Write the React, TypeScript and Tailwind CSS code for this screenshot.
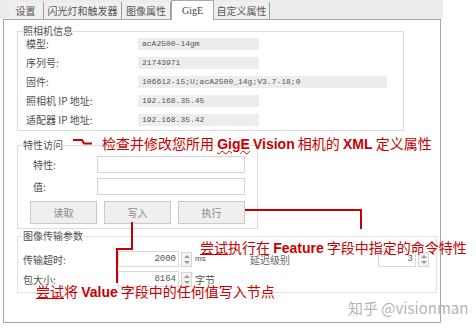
import React from "react";

const tabs = [
  { label: "设置", w: "w-[36px]" },
  { label: "闪光灯和触发器", w: "w-[78px]" },
  { label: "图像属性", w: "w-[49px]" },
  { label: "GigE", w: "w-[43px]", active: true },
  { label: "自定义属性", w: "w-[56px]" },
];

const info = [
  { label: "模型:", value: "acA2500-14gm", wide: false },
  { label: "序列号:", value: "21743971", wide: false },
  { label: "固件:", value: "106612-15;U;acA2500_14g;V3.7-18;0", wide: true },
  { label: "照相机 IP 地址:", value: "192.168.35.45", wide: false },
  { label: "适配器 IP 地址:", value: "192.168.35.42", wide: false },
];

function Spinner() {
  return (
    <div className="ml-[2px] flex h-[15px] w-[11px] flex-col items-center justify-center gap-[3px] border border-[#d6d6d6] bg-[#f4f4f4]">
      <div className="h-0 w-0 border-x-[3px] border-b-[3px] border-x-transparent border-b-[#9a9a9a]" />
      <div className="h-0 w-0 border-x-[3px] border-t-[3px] border-x-transparent border-t-[#9a9a9a]" />
    </div>
  );
}

function NumBox({ value, w }: { value: string; w: string }) {
  return (
    <div className={`${w} h-[16px] border border-[#d8d8d8] pr-[2px] text-right font-['Liberation_Mono',monospace] text-[9px] leading-[14px] text-[#555]`}>
      {value}
    </div>
  );
}

export default function App() {
  return (
    <div className="relative h-[329px] w-[476px] overflow-hidden bg-white font-['Noto_Sans_CJK_SC',sans-serif] text-[10px] text-[#505050]">
      {/* tab strip */}
      <div className="flex h-[19px] w-[443px] items-end bg-[#ececec] pl-[8px]">
        {tabs.map((t) =>
          t.active ? (
            <div
              key={t.label}
              className={`${t.w} relative z-10 -mb-px flex h-[20px] items-center justify-center border border-b-0 border-[#a8a8a8] bg-white font-['Liberation_Serif',serif] text-[10px] text-[#444]`}
            >
              {t.label}
            </div>
          ) : (
            <div
              key={t.label}
              className={`${t.w} flex h-[17px] items-center justify-center border-r border-[#9c9c9c] bg-[#efefef] leading-none text-[#555]`}
            >
              {t.label}
            </div>
          )
        )}
      </div>

      {/* panel */}
      <div className="ml-[3px] h-[304px] w-[438px] border border-[#a8a8a8] px-[13px] pt-[5px]">
        <fieldset className="w-[387px] border border-[#dcdcdc] pb-[1px] pl-[8px]">
          <legend className="-ml-[3px] leading-[12px]">照相机信息</legend>
          <div className="-mt-[3px] flex flex-col">
            {info.map((r) => (
              <div key={r.label} className="flex h-[19px] items-center">
                <span className="w-[112px]">{r.label}</span>
                <span
                  className={`${r.wide ? "w-[249px]" : "w-[121px]"} h-[12px] bg-[#ededed] pl-[4px] font-['Liberation_Mono',monospace] text-[8px] leading-[12px] text-[#555]`}
                >
                  {r.value}
                </span>
              </div>
            ))}
          </div>
        </fieldset>

        <fieldset className="mt-[8px] w-[241px] border border-[#dcdcdc] pb-[4px] pl-[12px]">
          <legend className="-ml-[7px] leading-[12px]">特性访问</legend>
          <div className="mt-[5px] flex flex-col gap-[5px]">
            <div className="flex items-center">
              <span className="w-[67px] pl-[3px]">特性:</span>
              <div className="h-[17px] w-[148px] border border-[#d4d4d4] bg-white" />
            </div>
            <div className="flex items-center">
              <span className="w-[67px] pl-[3px]">值:</span>
              <div className="h-[17px] w-[148px] border border-[#d4d4d4] bg-white" />
            </div>
            <div className="mt-[1px] flex gap-[7px]">
              {["读取", "写入", "执行"].map((b) => (
                <div
                  key={b}
                  className="flex h-[23px] w-[67px] items-center justify-center border border-[#cacaca] bg-[#efefef] text-[#8a8a8a]"
                >
                  {b}
                </div>
              ))}
            </div>
          </div>
        </fieldset>

        <fieldset className="mt-[1px] w-[420px] border border-[#e2e2e2] pb-[3px] pl-[5px]">
          <legend className="leading-[12px]">图像传输参数</legend>
          <div className="mt-[7px] flex flex-col">
            <div className="flex h-[20px] items-center">
              <span className="w-[95px]">传输超时:</span>
              <NumBox value="2000" w="w-[61px]" />
              <Spinner />
              <span className="ml-[3px] w-[55px] font-['Liberation_Sans',sans-serif] text-[8px]">ms</span>
              <span className="w-[128px] text-[#666]">延迟级别</span>
              <NumBox value="3" w="w-[38px]" />
              <Spinner />
            </div>
            <div className="flex h-[20px] items-center">
              <span className="w-[95px]">包大小:</span>
              <NumBox value="8164" w="w-[61px]" />
              <Spinner />
              <span className="ml-[3px]">字节</span>
            </div>
          </div>
        </fieldset>
      </div>

      {/* annotation lines */}
      <svg className="pointer-events-none absolute inset-0" width="476" height="329">
        <path d="M73 140 H82 L84 143.5 H92" stroke="#c80000" strokeWidth="2" fill="none" />
        <path d="M245 210 H361 V229" stroke="#c80000" strokeWidth="2" fill="none" />
        <path d="M132 222 V249 H117 V283" stroke="#c80000" strokeWidth="2" fill="none" />
      </svg>

      {/* annotation texts */}
      <div className="absolute left-[102px] top-[135px] whitespace-nowrap text-[14px] leading-[16px] text-[#c80000]">
        检查并修改您所用{" "}
        <b className="font-['Liberation_Sans',sans-serif] underline decoration-wavy decoration-[#c80000] decoration-1">GigE</b>{" "}
        <b className="font-['Liberation_Sans',sans-serif]">Vision</b> 相机的{" "}
        <b className="font-['Liberation_Sans',sans-serif]">XML</b> 定义属性
      </div>
      <div className="absolute left-[200px] top-[239px] whitespace-nowrap text-[14px] leading-[16px] text-[#c80000]">
        <span className="underline">尝试</span>执行在{" "}
        <b className="font-['Liberation_Sans',sans-serif]">Feature</b> 字段中指定的命令特性
      </div>
      <div className="absolute left-[36px] top-[283px] whitespace-nowrap text-[14px] leading-[16px] text-[#c80000]">
        <span className="underline">尝试</span>将{" "}
        <b className="font-['Liberation_Sans',sans-serif]">Value</b> 字段中的任何值写入节点
      </div>

      <div className="absolute left-[348px] top-[299px] whitespace-nowrap text-[15px] leading-[18px] text-[#b4b4b4]">
        知乎 @visionman
      </div>
    </div>
  );
}
